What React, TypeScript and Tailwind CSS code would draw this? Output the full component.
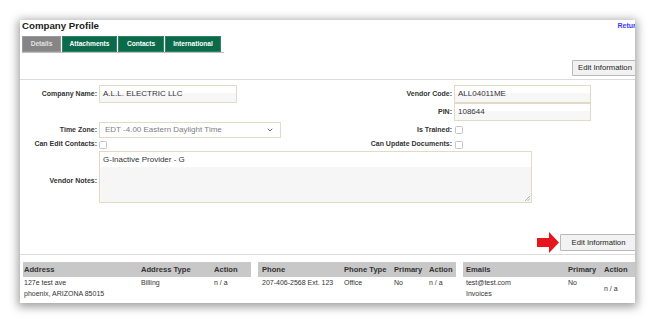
import React from 'react'
import { ChevronDown } from 'lucide-react'

const inputBox = 'border border-[#e2dac4] bg-[linear-gradient(#ffffff_0,#ffffff_45%,#f7f7f7_45%)] text-[8px] text-[#333] pl-[3px] flex items-center'
const label = 'text-[7px] font-bold text-[#333] text-right whitespace-nowrap'

function Checkbox() {
  return <div className="w-[8px] h-[8px] border border-[#c4c4c4] rounded-[1.5px] bg-white"></div>
}

function Arrow() {
  return (
    <svg width="22" height="21" viewBox="0 0 22 21">
      <polygon points="0,6 12,6 12,0 22,10.5 12,21 12,15 0,15" fill="#e5161d" />
    </svg>
  )
}

export default function App() {
  return (
    <div className="w-[655px] h-[324px] bg-white pl-[20px] pt-[20px] font-['Liberation_Sans',Arial,sans-serif]">
      <div className="w-[615px] h-[283px] bg-white overflow-hidden shadow-[0_2px_9px_2px_rgba(0,0,0,0.38)]">
        <div className="w-[622px]">

          {/* Title */}
          <div className="flex justify-between items-start pt-[1px] pl-[2px] h-[16px]">
            <h1 className="text-[9.7px] leading-[10px] font-bold text-[#222]">Company Profile</h1>
            <a className="text-[7px] leading-[10px] font-bold text-[#3b3bff] mr-[2px]">Return</a>
          </div>

          {/* Tabs */}
          <div className="flex gap-[1px] ml-[2px] w-[202px] border-b border-[#bdbdbd]">
            {[
              { name: 'Details', w: 'w-[39px]', active: true },
              { name: 'Attachments', w: 'w-[55px]', active: false },
              { name: 'Contacts', w: 'w-[46px]', active: false },
              { name: 'International', w: 'w-[56px]', active: false },
            ].map((t) => (
              <div
                key={t.name}
                className={`${t.w} h-[16px] flex items-center justify-center text-[6.6px] font-bold border ${t.active ? 'bg-[#858585] border-[#9a9a9a] text-[#e2e2e2]' : 'bg-[#0b6a4a] border-[#2f8464] text-white'}`}
              >
                {t.name}
              </div>
            ))}
          </div>

          {/* Edit button top */}
          <div className="flex justify-end mt-[7px] mr-[4px]">
            <button className="w-[66px] h-[16px] border border-[#b9b9b9] bg-[#f2f2f2] text-[7.7px] text-[#222] flex items-center justify-center rounded-[1px]">Edit Information</button>
          </div>
          <div className="h-px bg-[#dcdcdc] mt-[3px]"></div>

          {/* Form */}
          <div className="pl-[2px] mt-[5px] flex flex-col">
            <div className="flex items-center h-[18px]">
              <div className={`w-[75px] ${label}`}>Company Name:</div>
              <div className="w-[2px]"></div>
              <div className="w-[191px]">
                <div className={`${inputBox} w-[138px] h-[18px]`}>A.L.L. ELECTRIC LLC</div>
              </div>
              <div className={`w-[162px] ${label}`}>Vendor Code:</div>
              <div className="w-[2px]"></div>
              <div className={`${inputBox} w-[137px] h-[18px]`}>ALL04011ME</div>
            </div>
            <div className="flex items-center h-[18px]">
              <div className="w-[75px]"></div>
              <div className="w-[2px]"></div>
              <div className="w-[191px]"></div>
              <div className={`w-[162px] ${label}`}>PIN:</div>
              <div className="w-[2px]"></div>
              <div className={`${inputBox} w-[137px] h-[18px]`}>108644</div>
            </div>
            <div className="flex items-center h-[16px] mt-[1px]">
              <div className={`w-[75px] ${label}`}>Time Zone:</div>
              <div className="w-[2px]"></div>
              <div className="w-[191px]">
                <div className="w-[182px] h-[16px] border border-[#e2dac4] bg-white text-[8px] text-[#808080] pl-[5px] pr-[6px] flex items-center justify-between">
                  <span>EDT -4.00 Eastern Daylight Time</span>
                  <ChevronDown size={8} strokeWidth={2.5} className="text-[#555]" />
                </div>
              </div>
              <div className={`w-[162px] ${label}`}>Is Trained:</div>
              <div className="w-[3px]"></div>
              <Checkbox />
            </div>
            <div className="flex items-center h-[9px] mt-[2px]">
              <div className={`w-[75px] ${label}`}>Can Edit Contacts:</div>
              <div className="w-[2px]"></div>
              <div className="w-[191px]"><Checkbox /></div>
              <div className={`w-[162px] ${label}`}>Can Update Documents:</div>
              <div className="w-[3px]"></div>
              <Checkbox />
            </div>
            <div className="flex items-center mt-[2px]">
              <div className={`w-[75px] ${label} mt-[8px]`}>Vendor Notes:</div>
              <div className="w-[2px]"></div>
              <div className="relative w-[433px] h-[52px] border border-[#e2dac4] bg-[linear-gradient(#ffffff_0,#ffffff_15px,#f6f6f6_15px)] text-[8px] text-[#333] pl-[3px] pt-[3px] leading-[10px]">
                G-Inactive Provider - G
                <svg className="absolute right-[1px] bottom-[1px]" width="6" height="6" viewBox="0 0 6 6">
                  <line x1="1" y1="6" x2="6" y2="1" stroke="#999" strokeWidth="0.7" />
                  <line x1="3.5" y1="6" x2="6" y2="3.5" stroke="#999" strokeWidth="0.7" />
                </svg>
              </div>
            </div>
          </div>

          {/* Edit button bottom */}
          <div className="flex justify-end items-center gap-[1px] mt-[29px] mr-[5px]">
            <Arrow />
            <button className="w-[77px] h-[17px] border border-[#b9b9b9] bg-[#f2f2f2] text-[7.7px] text-[#222] flex items-center justify-center rounded-[1px]">Edit Information</button>
          </div>
          <div className="h-px bg-[#dcdcdc] mt-[1px]"></div>

          {/* Tables */}
          <div className="flex gap-[7px] ml-[3px] mt-[7px] text-[7px] text-[#333]">
            {/* Address */}
            <div className="w-[228px]">
              <div className="flex h-[15px] items-center bg-[#c8c8c8] text-[7.6px] font-bold text-[#333]">
                <div className="w-[118px] pl-[1px]">Address</div>
                <div className="w-[73px]">Address Type</div>
                <div className="flex-1">Action</div>
              </div>
              <div className="flex leading-[11px]">
                <div className="w-[118px] pl-[1px]">127e test ave<br />phoenix, ARIZONA 85015</div>
                <div className="w-[73px]">Billing</div>
                <div className="flex-1">n / a</div>
              </div>
            </div>

            {/* Phone */}
            <div className="w-[198px]">
              <div className="flex h-[15px] items-center bg-[#c8c8c8] text-[7.6px] font-bold text-[#333]">
                <div className="w-[86px] pl-[4px]">Phone</div>
                <div className="w-[50px]">Phone Type</div>
                <div className="w-[35px]">Primary</div>
                <div className="flex-1">Action</div>
              </div>
              <div className="flex leading-[11px]">
                <div className="w-[86px] pl-[4px]">207-406-2568 Ext. 123</div>
                <div className="w-[50px]">Office</div>
                <div className="w-[35px]">No</div>
                <div className="flex-1">n / a</div>
              </div>
            </div>

            {/* Emails */}
            <div className="w-[176px]">
              <div className="flex h-[15px] items-center bg-[#c8c8c8] text-[7.6px] font-bold text-[#333]">
                <div className="w-[105px] pl-[3px]">Emails</div>
                <div className="w-[36px]">Primary</div>
                <div className="flex-1">Action</div>
              </div>
              <div className="flex leading-[11px]">
                <div className="w-[105px] pl-[3px]">test@test.com<br />Invoices</div>
                <div className="w-[36px]">No</div>
                <div className="flex-1 self-center">n / a</div>
              </div>
            </div>
          </div>

        </div>
      </div>
    </div>
  )
}
